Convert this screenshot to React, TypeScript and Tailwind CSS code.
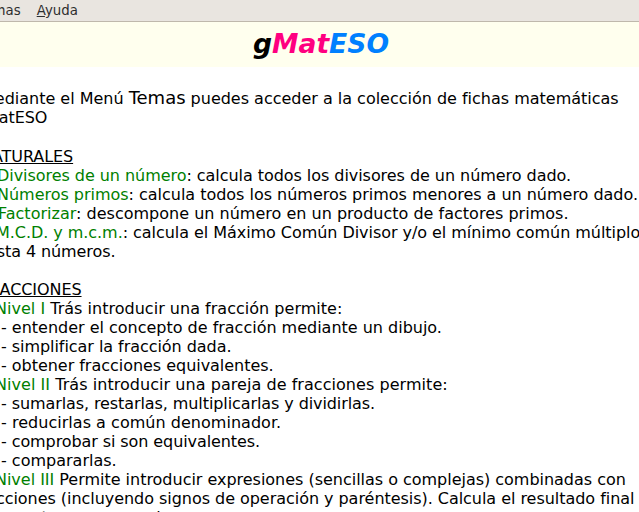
const G = ({ children }: { children: React.ReactNode }) => <span className="text-[#008000]">{children}</span>;
const H = ({ children }: { children: React.ReactNode }) => <span className="underline">{children}</span>;

export default function App() {
  return (
    <div className="h-[512px] w-[639px] overflow-hidden bg-white font-['DejaVu_Sans',sans-serif] text-black">
      <div className="flex h-[22px] items-center gap-[16px] border-b border-[#bfb8ac] bg-[#e9e5e0] text-[13.33px] text-[#2e2e2e]">
        <span className="ml-[-21.5px]">Temas</span>
        <span><u>A</u>yuda</span>
      </div>
      <div className="flex h-[45px] items-center justify-center bg-[#ffffee] pl-[3px] text-[26.6px] font-bold italic leading-none">
        <span>g</span><span className="text-[#ff0080]">Mat</span><span className="text-[#0080ff]">ESO</span>
      </div>
      <div className="ml-[-25px] mt-[21px] whitespace-nowrap text-[16px] leading-[19px] text-black">
        <div className="pl-[6px] tracking-[-0.01px]">Mediante el Menú <span className="text-[18px] leading-[19px]">Temas</span> puedes acceder a la colección de fichas matemáticas</div>
        <div className="tracking-[-0.09px]">gMatESO</div>
        <div className="h-[20px]" />
        <div className="pl-[5px] tracking-[-0.07px]"><H>NATURALES</H></div>
        <div className="pl-[22px] tracking-[-0.05px]"><G>Divisores de un número</G>: calcula todos los divisores de un número dado.</div>
        <div className="pl-[22px] tracking-[-0.02px]"><G>Números primos</G>: calcula todos los números primos menores a un número dado.</div>
        <div className="pl-[23px] tracking-[0.01px]"><G>Factorizar</G>: descompone un número en un producto de factores primos.</div>
        <div className="pl-[21px] tracking-[-0.05px]"><G>M.C.D. y m.c.m.</G>: calcula el Máximo Común Divisor y/o el mínimo común múltiplo</div>
        <div className="pl-[2px] tracking-[-0.09px]">hasta 4 números.</div>
        <div className="h-[19px]" />
        <div className="pl-[5px] tracking-[-0.07px]"><H>FRACCIONES</H></div>
        <div className="pl-[20px] tracking-[0.02px]"><G>Nivel I</G> Trás introducir una fracción permite:</div>
        <div className="pl-[26px] tracking-[-0.01px]">- entender el concepto de fracción mediante un dibujo.</div>
        <div className="pl-[26px] tracking-[-0.05px]">- simplificar la fracción dada.</div>
        <div className="pl-[26px] tracking-[-0.03px]">- obtener fracciones equivalentes.</div>
        <div className="pl-[20px] tracking-[0.05px]"><G>Nivel II</G> Trás introducir una pareja de fracciones permite:</div>
        <div className="pl-[26px] tracking-[-0.09px]">- sumarlas, restarlas, multiplicarlas y dividirlas.</div>
        <div className="pl-[26px] tracking-[0.03px]">- reducirlas a común denominador.</div>
        <div className="pl-[26px] tracking-[-0.09px]">- comprobar si son equivalentes.</div>
        <div className="pl-[26px] tracking-[0px]">- compararlas.</div>
        <div className="pl-[20px] tracking-[-0.02px]"><G>Nivel III</G> Permite introducir expresiones (sencillas o complejas) combinadas con</div>
        <div className="ml-[-1px] tracking-[-0.04px]">fracciones (incluyendo signos de operación y paréntesis). Calcula el resultado final</div>
        <div className="pl-[22px] tracking-[0.15px]">muestra resumen al</div>
      </div>
    </div>
  );
}
